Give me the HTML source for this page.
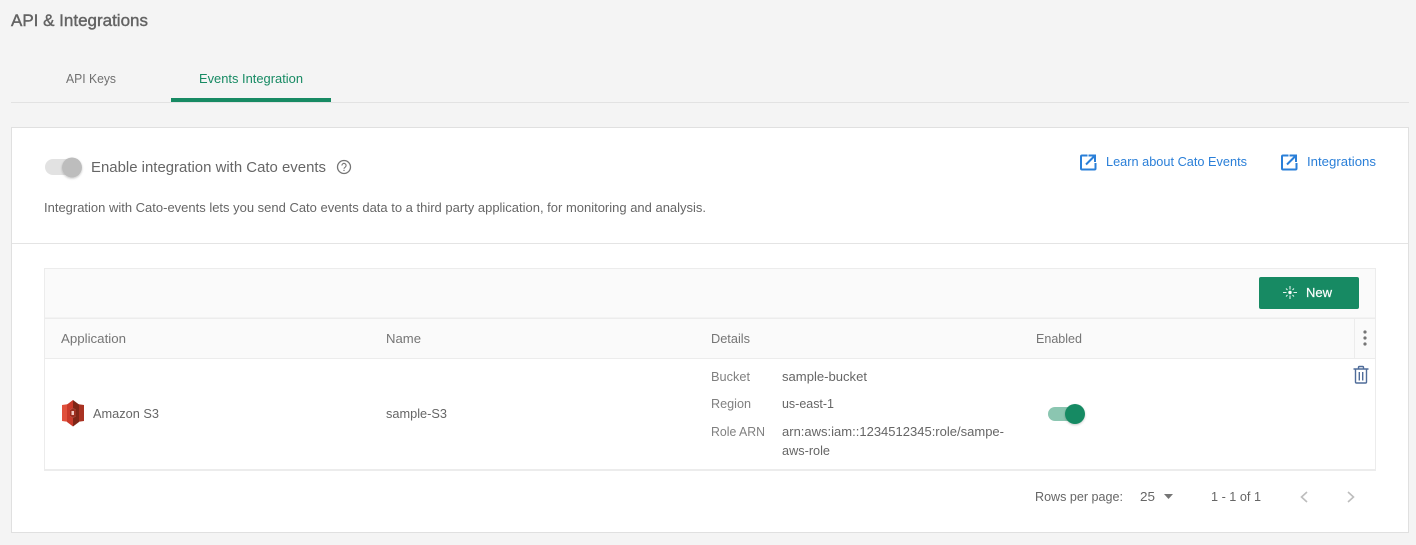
<!DOCTYPE html>
<html><head><meta charset="utf-8"><title>API &amp; Integrations</title>
<style>
html,body{margin:0;padding:0;background:#f4f4f4;width:1416px;height:545px;overflow:hidden}
svg{display:block}
text{font-family:"Liberation Sans",sans-serif;font-size:13px;fill:#666}
</style></head><body>
<svg width="1416" height="545" viewBox="0 0 1416 545" xmlns="http://www.w3.org/2000/svg">
<defs><filter id="s" x="-50%" y="-50%" width="200%" height="200%"><feDropShadow dx="0" dy="1" stdDeviation="1" flood-opacity=".22"/></filter></defs>
<rect width="1416" height="545" fill="#f4f4f4"/>
<text x="11" y="26" style="font-size:16.500px;fill:#636363;stroke:#636363;stroke-width:.4px" textLength="137" lengthAdjust="spacingAndGlyphs">API &amp; Integrations</text>
<text x="66" y="83" textLength="50" lengthAdjust="spacingAndGlyphs" style="fill:#707070">API Keys</text>
<text x="199" y="83" textLength="104" lengthAdjust="spacingAndGlyphs" style="fill:#178a63">Events Integration</text>
<rect x="11" y="102" width="1398" height="1" fill="#e2e2e2"/>
<rect x="171" y="98" width="160" height="4" fill="#178a63"/>
<!-- card -->
<rect x="11.500" y="127.500" width="1397" height="405" fill="#fff" stroke="#e0e0e0"/>
<rect x="12" y="243" width="1396" height="1" fill="#e4e4e4"/>
<rect x="45" y="159" width="36" height="16" rx="8" fill="#e2e2e2"/>
<circle cx="72" cy="167.500" r="10" fill="#bdbdbd" filter="url(#s)"/>
<text x="91" y="172" style="font-size:15px" textLength="235" lengthAdjust="spacingAndGlyphs">Enable integration with Cato events</text>
<circle cx="344" cy="167" r="6.500" fill="none" stroke="#757575" stroke-width="1.300"/>
<path d="M341.900 165.500a2.100 2.100 0 1 1 3.300 1.700c-.8.500-1.200.9-1.200 1.600" fill="none" stroke="#757575" stroke-width="1.100"/>
<circle cx="344" cy="170.400" r=".7" fill="#757575"/>
<text x="44" y="212" textLength="662" lengthAdjust="spacingAndGlyphs">Integration with Cato-events lets you send Cato events data to a third party application, for monitoring and analysis.</text>
<!-- links -->
<g fill="none" stroke="#2a7fd8" stroke-width="2">
<path d="M1087.500 155.500h-5.500a1 1 0 0 0-1 1v12a1 1 0 0 0 1 1h12.500a1 1 0 0 0 1-1v-5.500"/>
<path d="M1086 164.500l8.500-8.500M1088.500 155.500h6.500v6.500"/>
<path d="M1288.500 155.500h-5.500a1 1 0 0 0-1 1v12a1 1 0 0 0 1 1h12.500a1 1 0 0 0 1-1v-5.500"/>
<path d="M1287 164.500l8.500-8.500M1289.500 155.500h6.500v6.500"/>
</g>
<text x="1106" y="166" textLength="141" lengthAdjust="spacingAndGlyphs" style="fill:#2a7fd8">Learn about Cato Events</text>
<text x="1307" y="166" textLength="69" lengthAdjust="spacingAndGlyphs" style="fill:#2a7fd8">Integrations</text>
<!-- table -->
<rect x="44.500" y="268.500" width="1331" height="201" fill="#fff" stroke="#ececec"/>
<rect x="45" y="269" width="1330" height="89" fill="#fafafa"/>
<rect x="44" y="317.500" width="1332" height="1.500" fill="#ececec"/>
<rect x="44" y="358" width="1332" height="1" fill="#ececec"/>
<rect x="44" y="469" width="1332" height="2" fill="#ececec"/>
<rect x="1354" y="319" width="1" height="39" fill="#ececec"/>
<rect x="1259" y="277" width="100" height="32" rx="2" fill="#178a63"/>
<g stroke="#e4f3ee" stroke-width="1.100" fill="none"><path d="M1290 286v3.500M1290 295.500v3.500M1283 292.500h3.500M1293.500 292.500h3.500M1286 288.500l1.500 1.500M1292.500 295l1.500 1.500M1294 288.500l-1.500 1.500M1287.500 295l-1.500 1.500"/></g>
<circle cx="1290" cy="292.500" r="1.700" fill="#fff"/>
<text x="1306" y="297" textLength="26" lengthAdjust="spacingAndGlyphs" style="fill:#fff;stroke:#fff;stroke-width:.2px">New</text>
<text x="61" y="343" textLength="65" lengthAdjust="spacingAndGlyphs" style="fill:#757575">Application</text>
<text x="386" y="343" textLength="35" lengthAdjust="spacingAndGlyphs" style="fill:#757575">Name</text>
<text x="711" y="343" textLength="39" lengthAdjust="spacingAndGlyphs" style="fill:#757575">Details</text>
<text x="1036" y="343" textLength="46" lengthAdjust="spacingAndGlyphs" style="fill:#757575">Enabled</text>
<g fill="#757575"><circle cx="1365" cy="332" r="1.600"/><circle cx="1365" cy="338" r="1.600"/><circle cx="1365" cy="344" r="1.600"/></g>
<!-- trash -->
<g fill="none" stroke="#4f6c99" stroke-width="1.400">
<path d="M1353.500 369h15M1358.500 369v-1.500a1 1 0 0 1 1-1h3a1 1 0 0 1 1 1v1.500M1355.500 369.500v12.500a1 1 0 0 0 1 1h9a1 1 0 0 0 1-1v-12.500M1359.300 372v8.500M1362.700 372v8.500"/>
</g>
<!-- S3 icon -->
<path d="M62 405l7-1v18l-7-1z" fill="#e0503c"/>
<path d="M84 405l-7-1v18l7-1z" fill="#a93222"/>
<path d="M67 404.500L73 400v8l-3 2v6l3 2v8.500l-6-4.500z" fill="#c9392a"/>
<path d="M79 404.500L73 400v8l3 2v6l-3 2v8.500l6-4.500z" fill="#7f2617"/>
<path d="M70 410l3-2 3 2v6l-3 2-3-2z" fill="#9c2f20"/>
<path d="M71.500 411h2.500v4h-2.500z" fill="#f3c9c2"/>
<text x="93" y="418" textLength="66" lengthAdjust="spacingAndGlyphs">Amazon S3</text>
<text x="386" y="418" textLength="61" lengthAdjust="spacingAndGlyphs">sample-S3</text>
<text x="711" y="381" textLength="39" lengthAdjust="spacingAndGlyphs" style="fill:#808080">Bucket</text>
<text x="782" y="381" textLength="85" lengthAdjust="spacingAndGlyphs">sample-bucket</text>
<text x="711" y="408" textLength="40" lengthAdjust="spacingAndGlyphs" style="fill:#808080">Region</text>
<text x="782" y="408" textLength="52" lengthAdjust="spacingAndGlyphs">us-east-1</text>
<text x="711" y="436" textLength="54" lengthAdjust="spacingAndGlyphs" style="fill:#808080">Role ARN</text>
<text x="782" y="436" textLength="222" lengthAdjust="spacingAndGlyphs">arn:aws:iam::1234512345:role/sampe-</text>
<text x="782" y="455" textLength="48" lengthAdjust="spacingAndGlyphs">aws-role</text>
<rect x="1048" y="407" width="36" height="14" rx="7" fill="#8bc6b1"/>
<circle cx="1075" cy="414" r="10" fill="#178a63" filter="url(#s)"/>
<!-- pagination -->
<text x="1035" y="501" textLength="88" lengthAdjust="spacingAndGlyphs">Rows per page:</text>
<text x="1140" y="501" textLength="15" lengthAdjust="spacingAndGlyphs">25</text>
<path d="M1164 494h9l-4.500 5z" fill="#757575"/>
<text x="1211" y="501" textLength="50" lengthAdjust="spacingAndGlyphs">1 - 1 of 1</text>
<g fill="none" stroke="#bdbdbd" stroke-width="1.600"><path d="M1307 492l-5.500 5 5.500 5M1348 492l5.500 5-5.500 5"/></g>
</svg>
</body></html>
